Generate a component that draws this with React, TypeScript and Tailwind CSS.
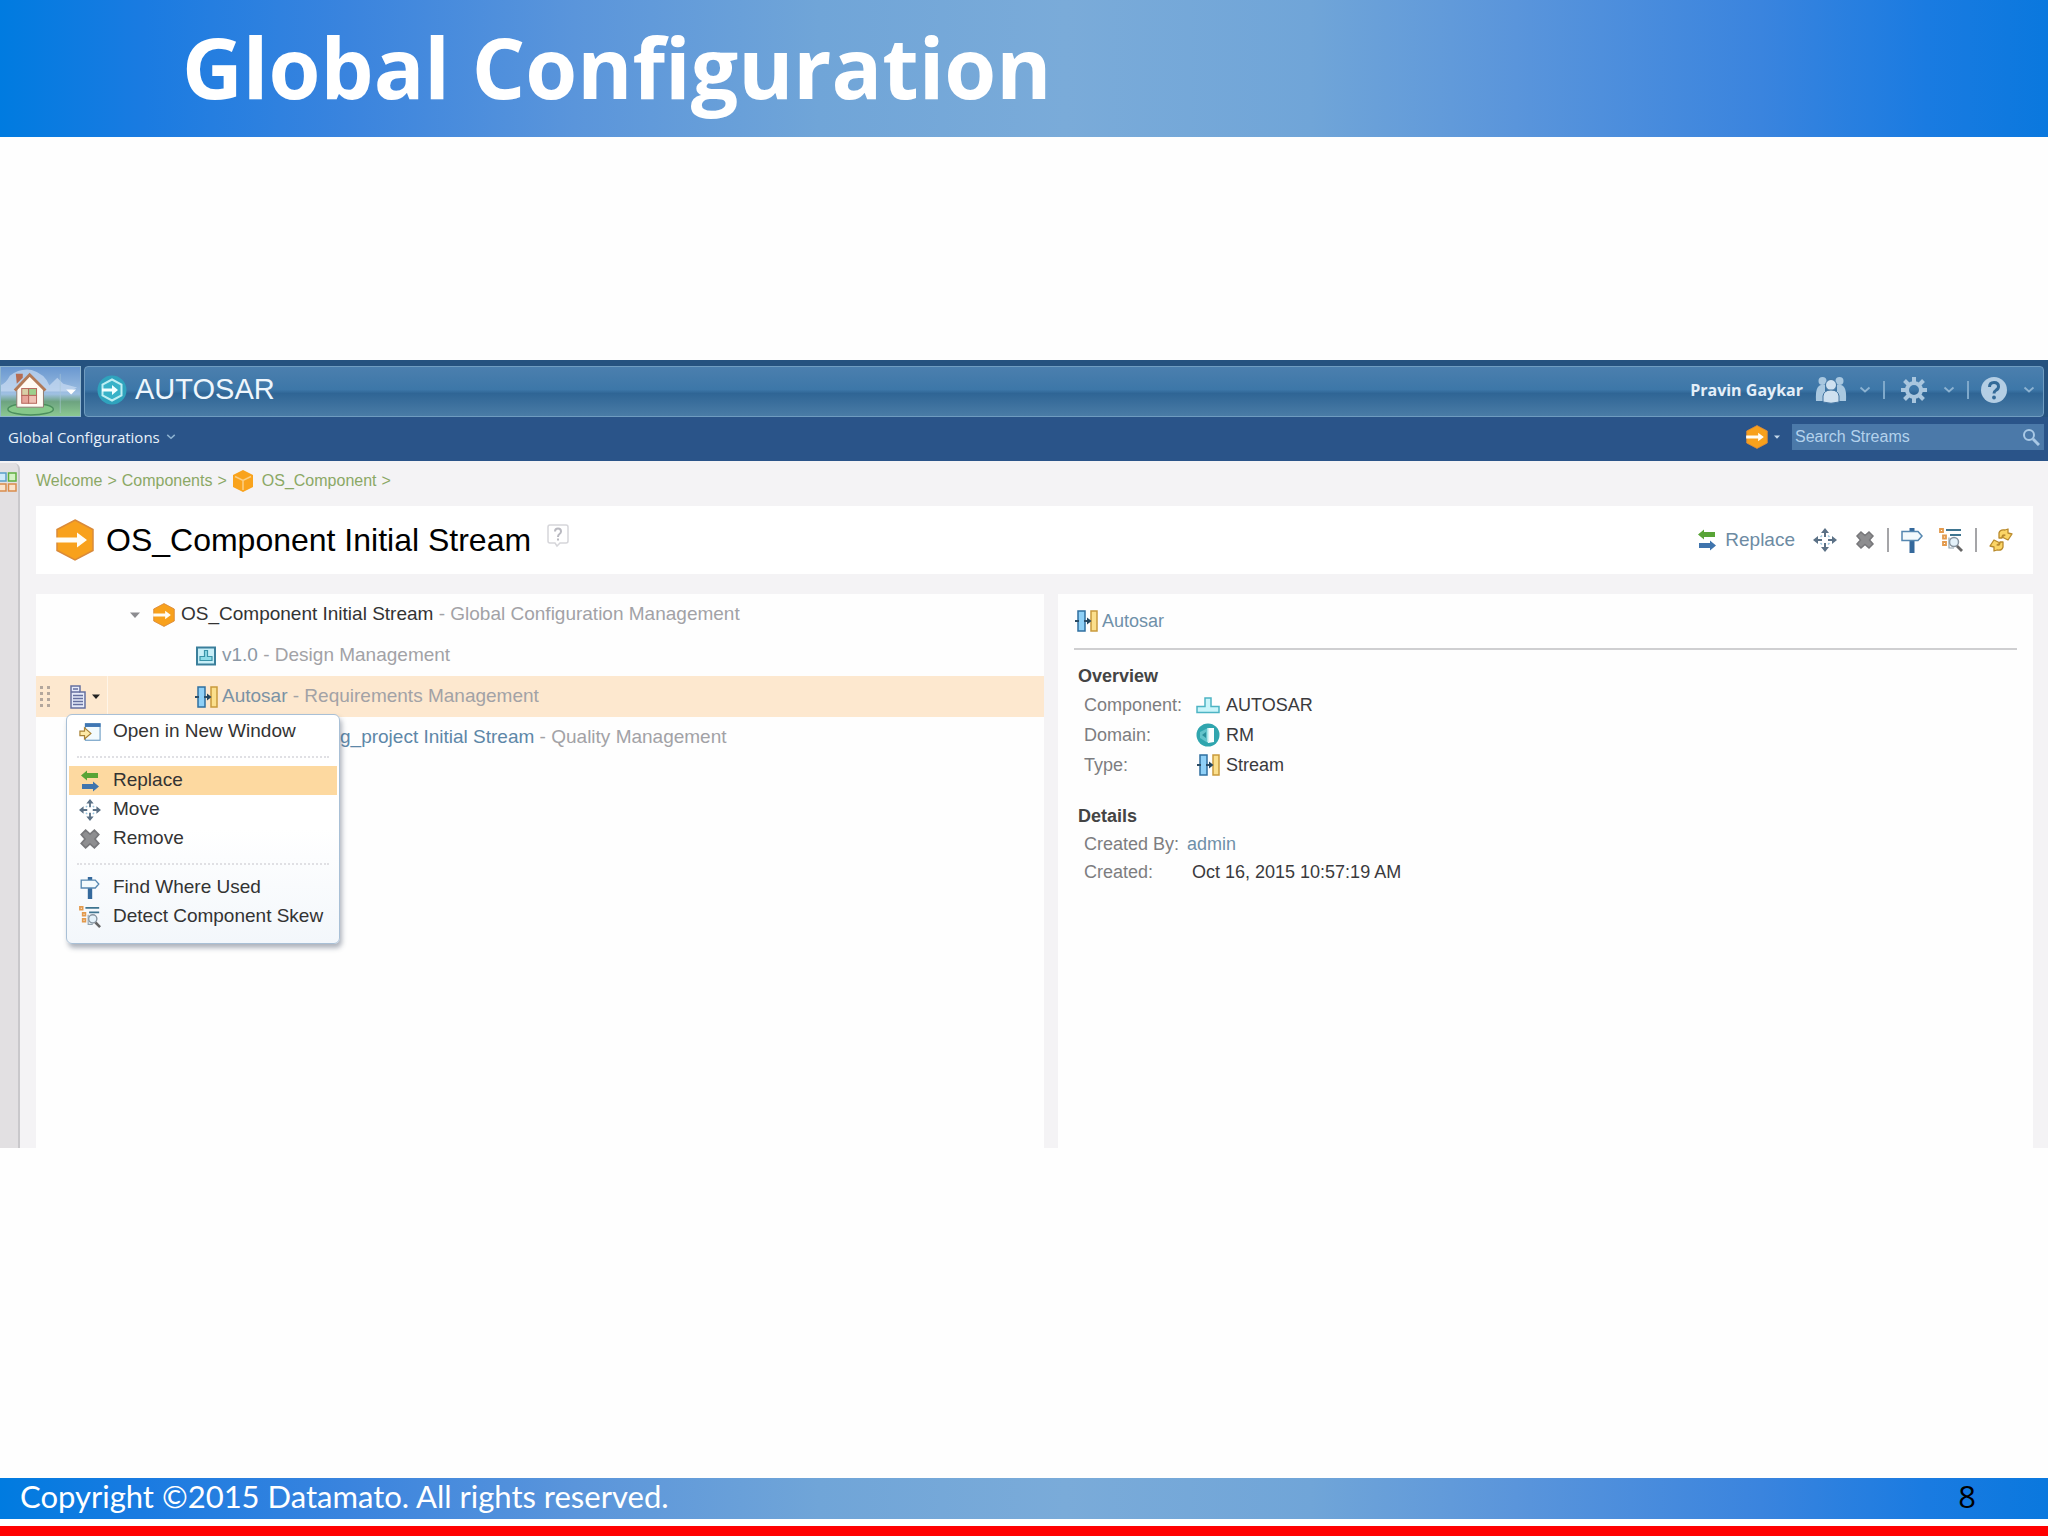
import React from "react";

type IconProps = { className?: string };

const HexArrow: React.FC<IconProps> = ({ className }) => (
  <svg viewBox="0 0 38 42" className={className} aria-hidden="true">
    <path d="M19 1 L37 10.500 V31.500 L19 41 L1 31.500 V10.500 Z" fill="#f8a11c" stroke="#d98a3a" strokeWidth="1.500" />
    <path d="M0 18.500 H21 V13.500 L31 21 L21 28.500 V23.500 H0 Z" fill="#fffdf6" />
  </svg>
);

const CubeIcon: React.FC<IconProps> = ({ className }) => (
  <svg viewBox="0 0 22 24" className={className} aria-hidden="true">
    <path d="M11 1 L21 6 V18 L11 23 L1 18 V6 Z" fill="#f9a31d" />
    <path d="M3 7.500 L11 11.500 L19 7.500 M11 11.500 V21" fill="none" stroke="#fbcf85" strokeWidth="1.500" />
  </svg>
);

const HomeIcon: React.FC<IconProps> = ({ className }) => (
  <svg viewBox="0 0 82 52" preserveAspectRatio="none" className={className} aria-hidden="true">
    <defs>
      <linearGradient id="sky" x1="0" y1="0" x2="0" y2="1">
        <stop offset="0" stopColor="#6796cf" />
        <stop offset="0.550" stopColor="#9fc0e2" />
        <stop offset="0.700" stopColor="#6da380" />
        <stop offset="1" stopColor="#8ecb93" />
      </linearGradient>
    </defs>
    <rect width="82" height="52" fill="url(#sky)" />
    <path d="M0 20 Q6 18 10 10 Q20 2 32 4 Q46 8 50 20 L58 12 L64 18 L78 22 L70 26 H0 Z" fill="#c9dcf2" opacity="0.700" />
    <ellipse cx="31" cy="44" rx="23" ry="6" fill="#86c98a" stroke="#4c8f5e" strokeWidth="1.500" />
    <path d="M17 22 L30 9 L44 22 V42 H17 Z" fill="#fffaf3" stroke="#8d7b70" strokeWidth="1" />
    <path d="M15 25 L30 9 L46 25" fill="none" stroke="#b27a58" strokeWidth="3" />
    <path d="M16 8 H23 V12 L17 18 Z" fill="#b56c52" />
    <g stroke="#b5655a" strokeWidth="1">
      <rect x="22" y="23" width="7" height="7" fill="#d8cfa6" />
      <rect x="29" y="23" width="8" height="7" fill="#9ccf8c" />
      <rect x="22" y="30" width="7" height="8" fill="#e7a49a" />
      <rect x="29" y="30" width="8" height="8" fill="#efc0b4" />
    </g>
    <path d="M61 8 V48" stroke="#a9c8d8" strokeWidth="1" opacity="0.600" />
    <path d="M67 24 H77 L72 29 Z" fill="#fff" />
    <rect x="0.500" y="0.500" width="81" height="51" fill="none" stroke="#8fb6cf" />
  </svg>
);

const ProjectIcon: React.FC<IconProps> = ({ className }) => (
  <svg viewBox="0 0 30 30" className={className} aria-hidden="true">
    <circle cx="15" cy="15" r="14.500" fill="#2fa3bd" />
    <path d="M15 4.500 L24.500 9.500 V20.500 L15 25.500 L5.500 20.500 V9.500 Z" fill="#38b2c8" stroke="#bdeef3" strokeWidth="2" />
    <path d="M5 13.500 H15 V10 L21 15 L15 20 V16.500 H5 Z" fill="#f2ffff" />
  </svg>
);

const PeopleIcon: React.FC<IconProps> = ({ className }) => (
  <svg viewBox="0 0 32 28" className={className} fill="#a9c8e0" aria-hidden="true">
    <circle cx="7.500" cy="5" r="4" />
    <circle cx="24.500" cy="5" r="4" />
    <path d="M1 25 Q0 10 6 9 H10 V25 Z M31 25 Q32 10 26 9 H22 V25 Z" />
    <circle cx="16" cy="9" r="5.500" fill="#cfe1f0" stroke="#40739f" />
    <path d="M8 26 V20 Q9 14 16 14 Q23 14 24 20 V26 Q16 28.500 8 26 Z" fill="#cfe1f0" stroke="#40739f" />
  </svg>
);

const GearIcon: React.FC<IconProps> = ({ className }) => (
  <svg viewBox="0 0 26 26" className={className} fill="none" stroke="#a9c6de" aria-hidden="true">
    <circle cx="13" cy="13" r="7" strokeWidth="4" />
    <path
      d="M13 0 V5 M13 21 V26 M0 13 H5 M21 13 H26 M3.500 3.500 L8 8 M18 18 L22.500 22.500 M22.500 3.500 L18 8 M8 18 L3.500 22.500"
      strokeWidth="4"
    />
  </svg>
);

const HelpIcon: React.FC<IconProps> = ({ className }) => (
  <svg viewBox="0 0 26 26" className={className} aria-hidden="true">
    <circle cx="13" cy="13" r="13" fill="#b4cee4" />
    <path d="M8.500 10 Q8.500 5.500 13 5.500 Q17.500 5.500 17.500 9.500 Q17.500 12 15 13.200 Q13 14.300 13 16.500" fill="none" stroke="#336a98" strokeWidth="3" />
    <circle cx="13" cy="20.500" r="1.900" fill="#336a98" />
  </svg>
);

const Chevron: React.FC<IconProps> = ({ className }) => (
  <svg viewBox="0 0 12 8" className={className} fill="none" stroke="#8db3d2" strokeWidth="1.800" aria-hidden="true">
    <path d="M1.500 1.500 L6 5.500 L10.500 1.500" />
  </svg>
);

const Caret: React.FC<IconProps> = ({ className }) => (
  <svg viewBox="0 0 10 6" className={className} fill="currentColor" aria-hidden="true">
    <path d="M0 0.500 H10 L5 6 Z" />
  </svg>
);

const SearchIcon: React.FC<IconProps> = ({ className }) => (
  <svg viewBox="0 0 18 18" className={className} fill="none" stroke="#a9c9e6" aria-hidden="true">
    <circle cx="7" cy="7" r="5" strokeWidth="2" />
    <path d="M11 11 L17 17" strokeWidth="3" />
  </svg>
);

const ReplaceIcon: React.FC<IconProps> = ({ className }) => (
  <svg viewBox="0 0 20 22" className={className} aria-hidden="true">
    <path d="M1 5.500 L7 0.500 V3 H18 V8 H7 V10.500 Z" fill="#58a436" />
    <path d="M19 16.500 L13 11.500 V14 H2 V19 H13 V21.500 Z" fill="#3f74ad" />
  </svg>
);

const MoveIcon: React.FC<IconProps> = ({ className }) => (
  <svg viewBox="0 0 24 24" className={className} aria-hidden="true">
    <path d="M12 0 L16 5 H8 Z M12 24 L16 19 H8 Z M0 12 L5 8 V16 Z M24 12 L19 8 V16 Z" fill="#5b7186" />
    <path d="M12 4 V9 M12 15 V20 M4 12 H9 M15 12 H20" stroke="#5b7186" strokeWidth="2" />
    <path d="M9 7.500 L7.500 9 M15 7.500 L16.500 9 M9 16.500 L7.500 15 M15 16.500 L16.500 15" stroke="#9cc7e0" strokeWidth="1.500" />
  </svg>
);

const RemoveIcon: React.FC<IconProps> = ({ className }) => (
  <svg viewBox="0 0 20 20" className={className} aria-hidden="true">
    <path
      d="M6 2 L10 5.500 L14 2 L18 6 L14.500 10 L18 14 L14 18 L10 14.500 L6 18 L2 14 L5.500 10 L2 6 Z"
      fill="#8e8e90"
      stroke="#77777a"
      strokeWidth="1.500"
    />
  </svg>
);

const SignpostIcon: React.FC<IconProps> = ({ className }) => (
  <svg viewBox="0 0 22 25" className={className} aria-hidden="true">
    <rect x="8.500" y="0" width="5" height="25" fill="#35699c" />
    <path d="M1 3.500 H17 L21 8 L17 12.500 H1 Z" fill="#f3fafd" stroke="#5587b0" strokeWidth="1.500" />
  </svg>
);

const SkewIcon: React.FC<IconProps> = ({ className }) => (
  <svg viewBox="0 0 24 24" className={className} fill="none" aria-hidden="true">
    <path d="M1 1 H4 V4 H1 Z M4 7.500 H7 V10.500 H4 Z M4 14 H7 V17 H4 Z" stroke="#e39a4d" strokeWidth="1.800" />
    <path d="M7 2 H22 M11 7 H22" stroke="#3f7590" strokeWidth="1.800" />
    <circle cx="15" cy="14" r="4.500" fill="#e4f2fa" stroke="#8794a0" strokeWidth="1.500" />
    <path d="M18 18 L23 23" stroke="#666" strokeWidth="2.800" />
    <path d="M10 9.500 V20 H15" stroke="#8fa3b0" strokeWidth="1.200" />
  </svg>
);

const RefreshIcon: React.FC<IconProps> = ({ className }) => (
  <svg viewBox="0 0 24 24" className={className} fill="#fbd566" stroke="#b98a2c" strokeWidth="1.300" strokeLinejoin="round" aria-hidden="true">
    <path d="M10 10 V5 Q11 1 16 2 L19 1 V5 L23 6 L19 12 L13 9 L16 7 Q13 6 13 10 Z" />
    <path d="M14 14 V19 Q13 23 8 22 L5 23 V19 L1 18 L5 12 L11 15 L8 17 Q11 18 11 14 Z" />
  </svg>
);

const StreamIcon: React.FC<IconProps> = ({ className }) => (
  <svg viewBox="0 0 24 22" className={className} aria-hidden="true">
    <rect x="4" y="1" width="7" height="20" fill="#8fd0f7" stroke="#2f6fa0" strokeWidth="1.500" />
    <path d="M23 1 H17 V21 H23 Z" fill="#fbdf8c" stroke="#c99a3c" strokeWidth="1.500" />
    <path d="M1 11 H5 M10 11 H14" stroke="#2c4d66" strokeWidth="1.800" />
    <path d="M13 7.500 L17.500 11 L13 14.500 Z" fill="#23455e" />
  </svg>
);

const BaselineIcon: React.FC<IconProps> = ({ className }) => (
  <svg viewBox="0 0 20 20" className={className} aria-hidden="true">
    <rect x="1" y="1.500" width="18" height="17" fill="#c8eff8" stroke="#3b7f9b" strokeWidth="2" />
    <path d="M8.500 4.500 H11.500 V10.500 H16 V14.500 H4 V10.500 H8.500 Z" fill="#8fdbe8" stroke="#3a93a8" strokeWidth="1.200" />
  </svg>
);

const ComponentIcon: React.FC<IconProps> = ({ className }) => (
  <svg viewBox="0 0 24 18" className={className} aria-hidden="true">
    <path d="M9 2 H15 V10.500 H23 V16.500 H1 V10.500 H9 Z" fill="#c9f5fa" stroke="#4db4c4" strokeWidth="1.500" />
  </svg>
);

const DomainIcon: React.FC<IconProps> = ({ className }) => (
  <svg viewBox="0 0 24 24" className={className} aria-hidden="true">
    <circle cx="12" cy="12" r="11.500" fill="#2fa5ae" />
    <path d="M12 5 L4 9 V15 L12 20 Z" fill="#63c3ca" />
    <path d="M10 9 V15 L6 12 Z" fill="#2b8f9b" />
    <path d="M12 5 H18 V19 L12 20 Z" fill="#fafefe" />
    <path d="M12 5 V19" stroke="#c5eef0" strokeWidth="1.500" />
  </svg>
);

const PageIcon: React.FC<IconProps> = ({ className }) => (
  <svg viewBox="0 0 16 24" className={className} aria-hidden="true">
    <path d="M1 1 H10 V7 H15 V23 H1 Z" fill="#e6ebfa" stroke="#6670a0" strokeWidth="1.500" />
    <path d="M1 7 H10 M3 4 H8 M3 10.500 H13 M3 13.500 H13 M3 16.500 H13 M3 19.500 H13" stroke="#6670a0" strokeWidth="1.300" />
  </svg>
);

const NewWindowIcon: React.FC<IconProps> = ({ className }) => (
  <svg viewBox="0 0 24 20" className={className} aria-hidden="true">
    <rect x="7" y="1" width="16" height="18" fill="#f2fafd" stroke="#6b9cc4" strokeWidth="1.200" />
    <rect x="6.500" y="0.500" width="17" height="4" fill="#3f76b3" />
    <path d="M1 9 H6 V5.500 L13 11.500 L6 17.500 V14 H1 Z" fill="#fdeaa8" stroke="#a98236" strokeWidth="1.300" />
  </svg>
);

const GridIcon: React.FC<IconProps> = ({ className }) => (
  <svg viewBox="0 0 17 22" className={className} strokeWidth="1.500" aria-hidden="true">
    <rect x="-3" y="2" width="9" height="8" fill="#cfeafa" stroke="#5a9ec9" />
    <rect x="8.500" y="2" width="7.500" height="8" fill="#d4f2c4" stroke="#5fae3f" />
    <rect x="-3" y="13" width="9" height="7" fill="#fbe3cb" stroke="#d98c4c" />
    <rect x="8.500" y="13" width="7.500" height="7" fill="#fbe3cb" stroke="#d98c4c" />
  </svg>
);

const DragHandle: React.FC<IconProps> = ({ className }) => (
  <svg viewBox="0 0 10 24" className={className} fill="#b3a79d" aria-hidden="true">
    {[1, 7, 13, 19].map((y) => (
      <React.Fragment key={y}>
        <rect x="0" y={y} width="3" height="3" />
        <rect x="7" y={y} width="3" height="3" />
      </React.Fragment>
    ))}
  </svg>
);

const HintIcon: React.FC<IconProps> = ({ className }) => (
  <svg viewBox="0 0 22 24" className={className} fill="none" stroke="#d6d6da" strokeWidth="1.500" aria-hidden="true">
    <path d="M3 1 H19 Q21 1 21 3 V17 Q21 19 19 19 H13 L10 22 L8 19 H3 Q1 19 1 17 V3 Q1 1 3 1 Z" />
    <path d="M8 7.500 Q8 4.500 11 4.500 Q14 4.500 14 7.500 Q14 9 12.500 10 Q11 11 11 13 M11 14.500 V16.500" stroke="#b9b9c0" strokeWidth="2" />
  </svg>
);

const menuGroups = [
  [{ label: "Open in New Window", Icon: NewWindowIcon, active: false }],
  [
    { label: "Replace", Icon: ReplaceIcon, active: true },
    { label: "Move", Icon: MoveIcon, active: false },
    { label: "Remove", Icon: RemoveIcon, active: false },
  ],
  [
    { label: "Find Where Used", Icon: SignpostIcon, active: false },
    { label: "Detect Component Skew", Icon: SkewIcon, active: false },
  ],
];

const ContextMenu: React.FC = () => (
  <div
    role="menu"
    className="absolute left-[30px] top-[38px] z-10 w-[274px] rounded-md border border-[#a9c0d6] bg-gradient-to-b from-white via-white to-[#f3f7fb] px-[2px] pt-[2px] pb-3 shadow-[2px_4px_5px_rgba(80,90,110,0.45)]"
  >
    {menuGroups.map((group, index) => (
      <div key={index}>
        {index > 0 && <div role="separator" className="mx-2 mt-[10px] border-t-2 border-dotted border-[#e0e0e4] pb-2" />}
        {group.map(({ label, Icon, active }) => (
          <button
            key={label}
            type="button"
            role="menuitem"
            className={`flex h-[29px] w-full items-center gap-3 pl-[10px] text-left text-[19px] whitespace-nowrap text-[#333] ${
              active ? "bg-[#fdd9a0]" : ""
            }`}
          >
            <Icon className="h-[22px] w-[22px] shrink-0" />
            {label}
          </button>
        ))}
      </div>
    ))}
  </div>
);

const TopBar: React.FC = () => (
  <header className="bg-[#2a5489]">
    <div className="flex h-[57px] gap-[3px] bg-[#25527f] pt-[6px] pr-1">
      <button type="button" aria-label="Home" className="h-[51px] w-[81px] shrink-0">
        <HomeIcon className="h-full w-full" />
      </button>
      <div className="flex h-[51px] flex-1 items-center rounded-sm border border-[#6f9cc0] bg-[linear-gradient(#4b7fae_0%,#3d77a8_46%,#2f6595_54%,#4a7ca6_100%)] pr-2 pb-1 pl-3">
        <ProjectIcon className="h-[30px] w-[30px]" />
        <h2 className="ml-2 text-[29px] text-[#eef6fc]">AUTOSAR</h2>
        <div className="ml-auto flex items-center font-['Open_Sans',sans-serif]">
          <span className="text-base font-bold text-[#e3eef8]">Pravin Gaykar</span>
          <button type="button" aria-label="Users" className="ml-3 flex items-center gap-3">
            <PeopleIcon className="h-7 w-8" />
            <Chevron className="h-2 w-3" />
          </button>
          <span className="mx-3 h-[18px] w-[2px] bg-[#7fa9cb]" />
          <button type="button" aria-label="Settings" className="ml-1 flex items-center gap-4">
            <GearIcon className="h-[26px] w-[26px]" />
            <Chevron className="h-2 w-3" />
          </button>
          <span className="mx-3 h-[18px] w-[2px] bg-[#7fa9cb]" />
          <button type="button" aria-label="Help" className="flex items-center gap-4">
            <HelpIcon className="h-[26px] w-[26px]" />
            <Chevron className="h-2 w-3" />
          </button>
        </div>
      </div>
    </div>
    <nav className="flex h-11 items-center justify-between pr-1 pb-1 pl-2">
      <button type="button" className="flex items-center gap-[6px] font-['Open_Sans',sans-serif] text-[15px] font-medium text-[#e9f1f9]">
        Global Configurations
        <Chevron className="h-2 w-[10px]" />
      </button>
      <div className="flex items-center">
        <button type="button" aria-label="Search scope" className="mr-3 flex items-center gap-[6px] text-[#c4d8ea]">
          <HexArrow className="h-6 w-[22px]" />
          <Caret className="h-1 w-[6px]" />
        </button>
        <div className="flex h-[26px] w-[252px] items-center bg-[#4b79a9] pr-1">
          <input
            type="text"
            aria-label="Search Streams"
            placeholder="Search Streams"
            className="w-full min-w-0 flex-1 pl-[3px] text-base text-white placeholder:text-[#b4d2ec] placeholder:opacity-100 focus:outline-none"
          />
          <SearchIcon className="h-[18px] w-[18px]" />
        </div>
      </div>
    </nav>
  </header>
);

const Breadcrumb: React.FC = () => (
  <nav aria-label="Breadcrumb" className="flex h-10 items-center gap-[5px] text-base text-[#8ba865]">
    <a href="#welcome">Welcome</a>
    <span>&gt;</span>
    <a href="#components">Components</a>
    <span>&gt;</span>
    <a href="#os-component" className="flex items-center gap-2">
      <CubeIcon className="h-6 w-[22px]" />
      OS_Component
    </a>
    <span>&gt;</span>
  </nav>
);

const TitleBar: React.FC = () => (
  <div className="flex h-[68px] items-center justify-between bg-white pr-5 pl-5">
    <div className="flex items-center">
      <HexArrow className="h-[42px] w-[38px]" />
      <h1 className="ml-3 text-[32px] text-black">OS_Component Initial Stream</h1>
      <HintIcon className="mb-2 ml-4 h-6 w-[22px]" />
    </div>
    <div className="flex items-center">
      <button type="button" className="flex items-center gap-2 text-[19px] text-[#6d8ba3]">
        <ReplaceIcon className="h-[22px] w-5" />
        Replace
      </button>
      <button type="button" aria-label="Move" className="ml-[18px]">
        <MoveIcon className="h-6 w-6" />
      </button>
      <button type="button" aria-label="Remove" className="ml-[18px]">
        <RemoveIcon className="h-5 w-5" />
      </button>
      <span className="mx-3 h-6 w-[2px] bg-[#a5a5a8]" />
      <button type="button" aria-label="Find Where Used">
        <SignpostIcon className="h-[25px] w-[22px]" />
      </button>
      <button type="button" aria-label="Detect Component Skew" className="ml-4">
        <SkewIcon className="h-6 w-6" />
      </button>
      <span className="mx-3 h-6 w-[2px] bg-[#a5a5a8]" />
      <button type="button" aria-label="Refresh">
        <RefreshIcon className="h-6 w-6" />
      </button>
    </div>
  </div>
);

const StreamTree: React.FC = () => (
  <ul className="min-w-0 bg-[#fefefe] text-[19px] whitespace-nowrap text-[#a2a2a6]">
    <li className="flex h-[41px] items-center pl-[93px]">
      <button type="button" aria-label="Collapse" className="text-[#8c8c90]">
        <Caret className="h-[6px] w-3" />
      </button>
      <HexArrow className="mr-[6px] ml-3 h-6 w-[22px]" />
      <span>
        <span className="text-[#333]">OS_Component Initial Stream</span> - Global Configuration Management
      </span>
    </li>
    <li className="flex h-[41px] items-center gap-[6px] pl-[160px]">
      <BaselineIcon className="h-5 w-5" />
      <span>
        <a href="#v1" className="text-[#8a98a5]">v1.0</a> - Design Management
      </span>
    </li>
    <li className="relative flex h-[41px] items-center bg-[#fde8cf]">
      <div className="flex h-full w-[72px] items-center border-r border-[#fff5e8] pl-1">
        <DragHandle className="h-6 w-[10px]" />
        <button type="button" aria-label="Actions" aria-haspopup="menu" className="ml-5 flex items-center gap-[6px] text-[#222]">
          <PageIcon className="h-6 w-4" />
          <Caret className="h-[5px] w-2" />
        </button>
      </div>
      <StreamIcon className="mr-1 ml-[86px] h-[22px] w-6" />
      <span>
        <a href="#autosar" className="text-[#7a92a5]">Autosar</a> - Requirements Management
      </span>
      <ContextMenu />
    </li>
    <li className="flex h-[41px] items-center pl-[304px]">
      <span>
        <a href="#project" className="text-[#5d87a8]">g_project Initial Stream</a> - Quality Management
      </span>
    </li>
  </ul>
);

const overview = [
  { label: "Component:", value: "AUTOSAR", Icon: ComponentIcon },
  { label: "Domain:", value: "RM", Icon: DomainIcon },
  { label: "Type:", value: "Stream", Icon: StreamIcon },
];

const DetailPanel: React.FC = () => (
  <section className="min-w-0 bg-[#fefefe] px-4 text-lg leading-7 text-[#3a3a3d]">
    <div className="flex h-14 items-center gap-1 border-b-2 border-[#cfcfd1]">
      <StreamIcon className="h-[22px] w-6" />
      <a href="#autosar" className="text-[#6f90a9]">Autosar</a>
    </div>
    <div className="pt-3 pl-1">
      <h3 className="font-bold text-[#444]">Overview</h3>
      <dl className="pl-[6px]">
        {overview.map(({ label, value, Icon }) => (
          <div key={label} className="flex h-[30px] items-center">
            <dt className="w-[112px] text-[#7d7d80]">{label}</dt>
            <dd className="flex items-center gap-[6px]">
              <Icon className="h-6 w-6" />
              {value}
            </dd>
          </div>
        ))}
      </dl>
      <h3 className="pt-[22px] font-bold text-[#444]">Details</h3>
      <dl className="pl-[6px]">
        <div className="flex gap-2">
          <dt className="text-[#7d7d80]">Created By:</dt>
          <dd>
            <a href="#admin" className="text-[#6f90a9]">admin</a>
          </dd>
        </div>
        <div className="flex">
          <dt className="w-[108px] text-[#7d7d80]">Created:</dt>
          <dd>Oct 16, 2015 10:57:19 AM</dd>
        </div>
      </dl>
    </div>
  </section>
);

const App: React.FC = () => {
  return (
    <div className="flex min-h-screen flex-col bg-[#fefefe] font-['Liberation_Sans',Arial,sans-serif]">
      <div className="flex h-[137px] items-center bg-[linear-gradient(90deg,#007be0_0%,#1a7be1_7%,#3a84de_17%,#5a95db_28%,#70a5d8_40%,#7aabd9_52%,#70a5d8_64%,#5a95db_74%,#3a84de_86%,#1a7be1_94%,#0a78de_100%)] pb-1 pl-[182px]">
        <div className="font-['Open_Sans',sans-serif] text-[84px] leading-none font-bold text-white">Global Configuration</div>
      </div>

      <main className="mt-[223px] mb-10">
        <TopBar />
        <div className="flex bg-[#f4f3f5]">
          <aside className="mt-[2px] w-5 rounded-tr-md border-r-2 border-[#c9c8cb] bg-[#e2e0e2] pt-2">
            <GridIcon className="h-[22px] w-[17px]" />
          </aside>
          <div className="min-w-0 flex-1 pr-[15px] pl-4">
            <div className="pb-[5px]">
              <Breadcrumb />
            </div>
            <TitleBar />
            <div className="mt-5 grid min-h-[554px] grid-cols-[1008fr_975fr] gap-[14px]">
              <StreamTree />
              <DetailPanel />
            </div>
          </div>
        </div>
      </main>

      <footer className="mt-auto">
        <div className="flex h-[41px] items-center justify-between bg-[linear-gradient(90deg,#007be0_0%,#1a7be1_7%,#3a84de_17%,#5a95db_28%,#70a5d8_40%,#7aabd9_52%,#70a5d8_64%,#5a95db_74%,#3a84de_86%,#1a7be1_94%,#0a78de_100%)] pr-[72px] pb-1 pl-5">
          <p className="font-[Lato,sans-serif] text-[31px] leading-none text-white">Copyright ©2015 Datamato. All rights reserved.</p>
          <span className="font-['Open_Sans',sans-serif] text-[31px] leading-none font-medium text-black">8</span>
        </div>
        <div className="mt-[7px] h-[10px] bg-[#ff0000]" />
      </footer>
    </div>
  );
};

export default App;
